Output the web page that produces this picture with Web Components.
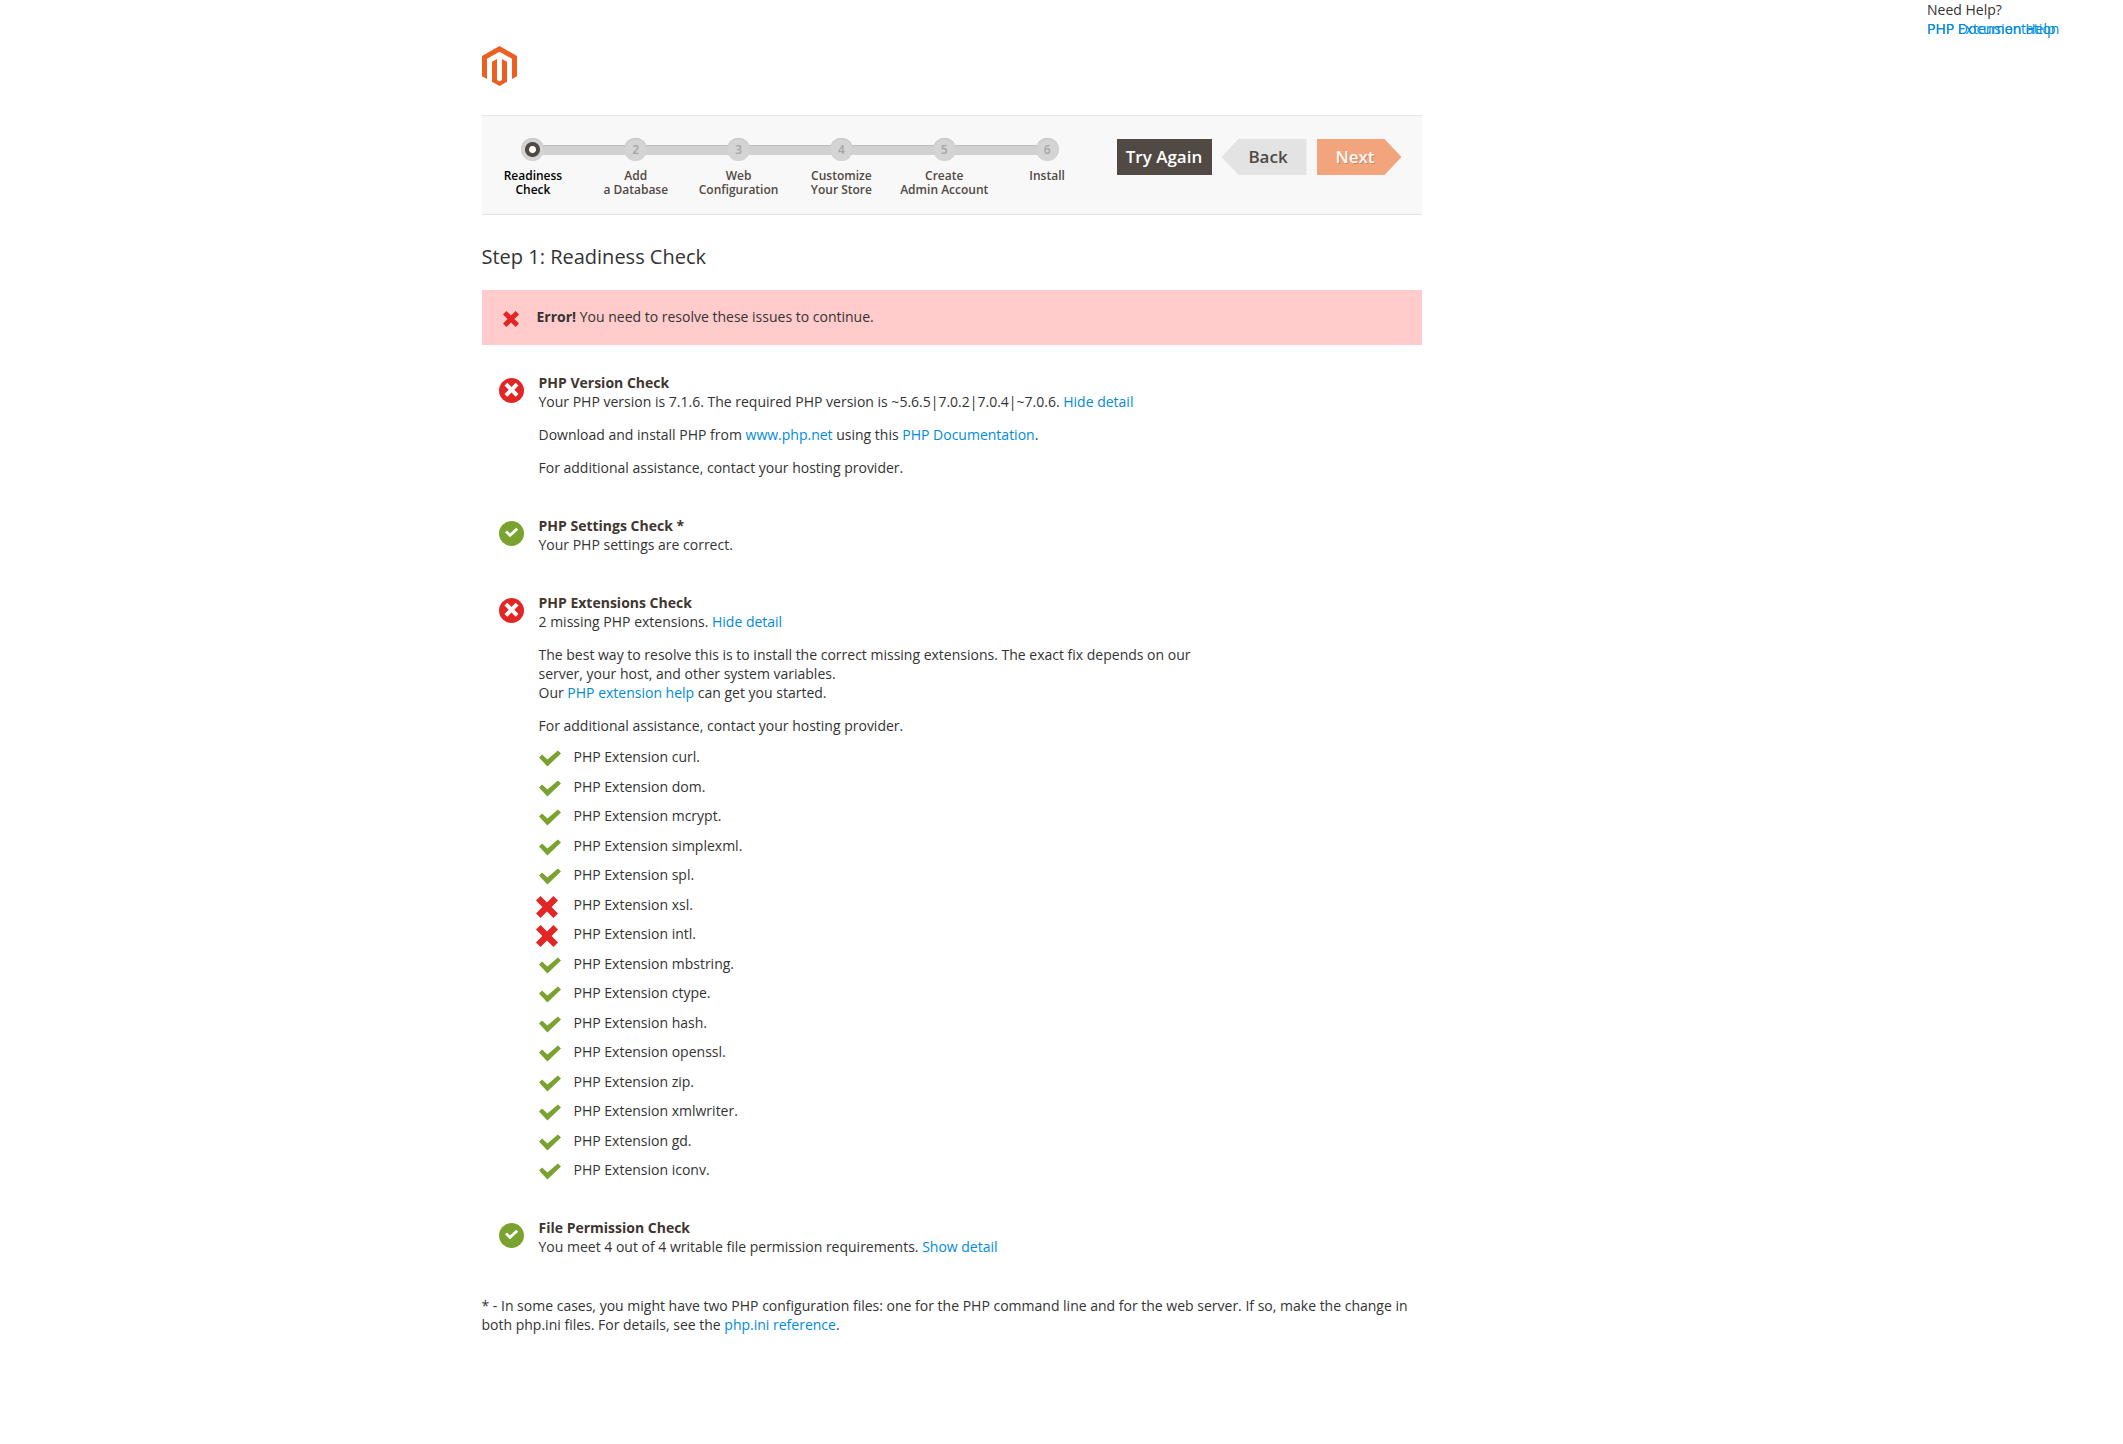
<!DOCTYPE html>
<html lang="en">
<head>
<meta charset="utf-8">
<title>Readiness Check</title>
<style>
  body {
    margin: 0;
    background: #fff;
    color: #333;
    font-family: 'Open Sans', sans-serif;
    font-size: 14px;
    line-height: 19px;
  }
  a {
    color: #008bdb;
    text-decoration: none;
  }
  a:hover {
    text-decoration: underline;
  }
  p {
    margin: 14px 0 0;
  }
  h1 {
    margin: 28px 0 19px;
    font-size: 20px;
    font-weight: 400;
    line-height: 28px;
  }
  h2 {
    margin: 0;
    color: #41362f;
    font-size: 14px;
    font-weight: 700;
  }
</style>
</head>
<body>
<setup-page>
  <help-panel slot="help">
    <span>Need Help?</span>
    <a href="#extensions">PHP Extension Help</a>
    <a href="#docs">PHP Documentation</a>
  </help-panel>

  <magento-logo></magento-logo>

  <setup-nav>
    <progress-step state="active">Readiness<br>Check</progress-step>
    <progress-step number="2">Add<br>a Database</progress-step>
    <progress-step number="3">Web<br>Configuration</progress-step>
    <progress-step number="4">Customize<br>Your Store</progress-step>
    <progress-step number="5">Create<br>Admin Account</progress-step>
    <progress-step number="6" state="last">Install</progress-step>
    <setup-button slot="buttons" kind="primary">Try Again</setup-button>
    <setup-button slot="buttons" kind="back">Back</setup-button>
    <setup-button slot="buttons" kind="next">Next</setup-button>
  </setup-nav>

  <h1>Step 1: Readiness Check</h1>

  <error-message><strong>Error!</strong> You need to resolve these issues to continue.</error-message>

  <readiness-item status="failed">
    <h2 slot="title">PHP Version Check</h2>
    <span slot="summary">Your PHP version is 7.1.6. The required PHP version is ~5.6.5|7.0.2|7.0.4|~7.0.6. <a href="#version">Hide detail</a></span>
    <p>Download and install PHP from <a href="#php">www.php.net</a> using this <a href="#docs">PHP Documentation</a>.</p>
    <p>For additional assistance, contact your hosting provider.</p>
  </readiness-item>

  <readiness-item status="success">
    <h2 slot="title">PHP Settings Check *</h2>
    <span slot="summary">Your PHP settings are correct.</span>
  </readiness-item>

  <readiness-item status="failed">
    <h2 slot="title">PHP Extensions Check</h2>
    <span slot="summary">2 missing PHP extensions. <a href="#extensions">Hide detail</a></span>
    <p>The best way to resolve this is to install the correct missing extensions. The exact fix depends on our server, your host, and other system variables.<br>Our <a href="#help">PHP extension help</a> can get you started.</p>
    <p>For additional assistance, contact your hosting provider.</p>
    <extension-list
      names="curl dom mcrypt simplexml spl xsl intl mbstring ctype hash openssl zip xmlwriter gd iconv"
      missing="xsl intl"></extension-list>
  </readiness-item>

  <readiness-item status="success">
    <h2 slot="title">File Permission Check</h2>
    <span slot="summary">You meet 4 out of 4 writable file permission requirements. <a href="#permissions">Show detail</a></span>
  </readiness-item>

  <foot-note>* - In some cases, you might have two PHP configuration files: one for the PHP command line and for the web server. If so, make the change in both php.ini files. For details, see the <a href="#ini">php.ini reference</a>.</foot-note>
</setup-page>

<script>
class SetupPage extends HTMLElement {
  constructor() {
    super();
    this.attachShadow({ mode: 'open' });
  }

  connectedCallback() {
    this.shadowRoot.innerHTML = `
      <style>
        :host {
          display: block;
        }
        .page {
          box-sizing: border-box;
          display: grid;
          grid-template-columns: minmax(0, 1fr) 200px;
          column-gap: 20px;
          max-width: 1200px;
          margin: 0 auto;
          padding: 46px 20px;
        }
      </style>
      <slot name="help"></slot>
      <div class="page">
        <main><slot></slot></main>
      </div>
    `;
  }
}

class HelpPanel extends HTMLElement {
  constructor() {
    super();
    this.attachShadow({ mode: 'open' });
  }

  connectedCallback() {
    this.shadowRoot.innerHTML = `
      <style>
        /* Floats over the top right corner of the page */
        :host {
          position: absolute;
          top: 0;
          right: 0;
          display: grid;
          grid-template-columns: 1fr;
          justify-items: start;
          width: 196px;
        }
        /* Both links share one cell */
        ::slotted(a) {
          grid-area: 2 / 1;
        }
      </style>
      <slot></slot>
    `;
  }
}

class MagentoLogo extends HTMLElement {
  constructor() {
    super();
    this.attachShadow({ mode: 'open' });
  }

  connectedCallback() {
    this.shadowRoot.innerHTML = `
      <style>
        :host {
          display: block;
          margin-bottom: 29px;
        }
        svg {
          display: block;
        }
      </style>
      <svg width="35" height="40" viewBox="0 0 35 40" fill="#eb5f22" aria-hidden="true">
        <path d="M17.5 0 35 10v20.2l-5 2.9V12.8L17.5 5.7 5 12.8v20.3l-5-2.9V10z" />
        <path d="M15 13v21l2.5 1.4L20 34V13l5 2.8v19.9L17.5 40 10 35.7V15.8z" />
      </svg>
    `;
  }
}

class SetupNav extends HTMLElement {
  constructor() {
    super();
    this.attachShadow({ mode: 'open' });
  }

  connectedCallback() {
    this.shadowRoot.innerHTML = `
      <style>
        :host {
          display: block;
        }
        nav {
          display: flex;
          align-items: flex-start;
          gap: 18px;
          padding: 22px 20px 17px 0;
          background: #f8f8f8;
          border: solid #e3e3e3;
          border-width: 1px 0;
        }
        .steps {
          flex: 1;
          display: grid;
          grid-template-columns: repeat(6, minmax(0, 1fr));
        }
        .buttons {
          display: flex;
          gap: 10px;
          padding-top: 1px;
        }
      </style>
      <nav>
        <div class="steps"><slot></slot></div>
        <div class="buttons"><slot name="buttons"></slot></div>
      </nav>
    `;
  }
}

class ProgressStep extends HTMLElement {
  constructor() {
    super();
    this.attachShadow({ mode: 'open' });
  }

  connectedCallback() {
    const number = this.getAttribute('number') || '';

    this.shadowRoot.innerHTML = `
      <style>
        :host {
          position: relative;
          display: flex;
          flex-direction: column;
          align-items: center;
          gap: 8px;
          color: #514943;
          font-size: 12px;
          font-weight: 600;
          line-height: 14px;
          text-align: center;
        }
        :host([state="active"]) {
          color: #000;
        }
        /* Track from this dot to the next one */
        :host(:not([state="last"]))::before {
          content: '';
          position: absolute;
          top: 7px;
          left: 50%;
          width: 100%;
          height: 10px;
          background: #d1d1d1;
          box-shadow: inset 0 1px 0 #bdbdbd;
        }
        .dot {
          position: relative;
          z-index: 1;
          width: 23px;
          height: 23px;
          border-radius: 50%;
          background: #d4d4d4;
          box-shadow: inset 0 1px 1px #c4c4c4;
          color: #a6a6a6;
          line-height: 23px;
        }
        :host([state="active"]) .dot {
          background: radial-gradient(circle, #fff 3px, #514943 4px, #514943 7px, #d4d4d4 8px);
        }
        .label {
          white-space: nowrap;
        }
      </style>
      <div class="dot">${number}</div>
      <div class="label"><slot></slot></div>
    `;
  }
}

class SetupButton extends HTMLElement {
  constructor() {
    super();
    this.attachShadow({ mode: 'open' });
  }

  connectedCallback() {
    this.shadowRoot.innerHTML = `
      <style>
        :host {
          display: block;
        }
        button {
          display: block;
          box-sizing: border-box;
          width: 85px;
          height: 36px;
          margin: 0;
          padding: 0;
          border: 0;
          font: 600 17px/36px 'Open Sans', sans-serif;
          white-space: nowrap;
          cursor: pointer;
        }
        :host([kind="primary"]) button {
          width: 95px;
          background: #514943;
          color: #fff;
        }
        :host([kind="back"]) button {
          padding-left: 8px;
          background: #e3e3e3;
          color: #514943;
          clip-path: polygon(17px 0, 100% 0, 100% 100%, 17px 100%, 0 50%);
        }
        :host([kind="next"]) button {
          padding-right: 8px;
          background: #f2a57d;
          color: #fbf7f5;
          text-shadow: 1px 1px 0 rgba(0, 0, 0, .2);
          clip-path: polygon(0 0, calc(100% - 17px) 0, 100% 50%, calc(100% - 17px) 100%, 0 100%);
        }
      </style>
      <button type="button"><slot></slot></button>
    `;
  }
}

class ErrorMessage extends HTMLElement {
  constructor() {
    super();
    this.attachShadow({ mode: 'open' });
  }

  connectedCallback() {
    this.shadowRoot.innerHTML = `
      <style>
        :host {
          display: grid;
          grid-template-columns: 16px 1fr;
          column-gap: 18px;
          padding: 17px 21px 18px;
          background: #ffcbcb;
        }
        svg {
          margin-top: 4px;
        }
      </style>
      <svg width="16" height="16" viewBox="0 0 16 16" fill="#e22626" aria-hidden="true">
        <path d="M3.4 0 8 4.6 12.6 0 16 3.4 11.4 8 16 12.6 12.6 16 8 11.4 3.4 16 0 12.6 4.6 8 0 3.4z" />
      </svg>
      <div><slot></slot></div>
    `;
  }
}

class ReadinessItem extends HTMLElement {
  constructor() {
    super();
    this.attachShadow({ mode: 'open' });
  }

  connectedCallback() {
    const failed = this.getAttribute('status') === 'failed';
    const color = failed ? '#e22626' : '#79a22e';
    const mark = failed
      ? 'M8.3 4.8 12.5 9l4.2-4.2 2.8 2.8-4.2 4.2 4.2 4.2-2.8 2.8-4.2-4.2-4.2 4.2L5.5 16l4.2-4.2-4.2-4.2z'
      : 'M6 11.5l2-2 3 3 6.2-5.7 2 2L11 16.3z';

    this.shadowRoot.innerHTML = `
      <style>
        :host {
          display: grid;
          grid-template-columns: 25px minmax(0, 660px);
          column-gap: 15px;
          margin-top: 39px;
          padding-left: 17px;
        }
        :host(:first-of-type) {
          margin-top: 28px;
        }
        svg {
          margin-top: 5px;
        }
      </style>
      <svg width="25" height="25" viewBox="0 0 25 25" aria-hidden="true">
        <circle cx="12.5" cy="12.5" r="12.5" fill="${color}" />
        <path d="${mark}" fill="#fff" />
      </svg>
      <div>
        <slot name="title"></slot>
        <slot name="summary"></slot>
        <slot></slot>
      </div>
    `;
  }
}

class ExtensionList extends HTMLElement {
  constructor() {
    super();
    this.attachShadow({ mode: 'open' });
  }

  connectedCallback() {
    const names = this.getAttribute('names').split(' ');
    const missing = this.getAttribute('missing').split(' ');

    const check = `
      <svg width="22" height="22" viewBox="0 0 22 22" fill="#79a22e" aria-hidden="true">
        <path d="M0 9.5 3.1 6.4 8.4 11.5 18.9 2.5 22 5.6 8.4 18.5z" />
      </svg>`;
    const cross = `
      <svg class="cross" width="22" height="22" viewBox="0 0 22 22" fill="#e22626" aria-hidden="true">
        <path d="M4.6 0 11 6.4 17.4 0 22 4.6 15.6 11 22 17.4 17.4 22 11 15.6 4.6 22 0 17.4 6.4 11 0 4.6z" />
      </svg>`;

    const rows = names.map(name => `
      <li>${missing.includes(name) ? cross : check}<span>PHP Extension ${name}.</span></li>`).join('');

    this.shadowRoot.innerHTML = `
      <style>
        :host {
          display: block;
          margin-top: 12px;
        }
        ul {
          margin: 0;
          padding: 0;
          list-style: none;
        }
        li {
          display: grid;
          grid-template-columns: 22px 1fr;
          column-gap: 13px;
          height: 19px;
        }
        li:nth-child(even) {
          margin: 11px 0 10px;
        }
        svg {
          margin-top: 1px;
        }
        .cross {
          margin-left: -3px;
        }
      </style>
      <ul>${rows}</ul>
    `;
  }
}

class FootNote extends HTMLElement {
  constructor() {
    super();
    this.attachShadow({ mode: 'open' });
  }

  connectedCallback() {
    this.shadowRoot.innerHTML = `
      <style>
        :host {
          display: block;
          margin-top: 40px;
        }
      </style>
      <slot></slot>
    `;
  }
}

customElements.define('setup-page', SetupPage);
customElements.define('help-panel', HelpPanel);
customElements.define('magento-logo', MagentoLogo);
customElements.define('setup-nav', SetupNav);
customElements.define('progress-step', ProgressStep);
customElements.define('setup-button', SetupButton);
customElements.define('error-message', ErrorMessage);
customElements.define('readiness-item', ReadinessItem);
customElements.define('extension-list', ExtensionList);
customElements.define('foot-note', FootNote);
</script>
</body>
</html>
